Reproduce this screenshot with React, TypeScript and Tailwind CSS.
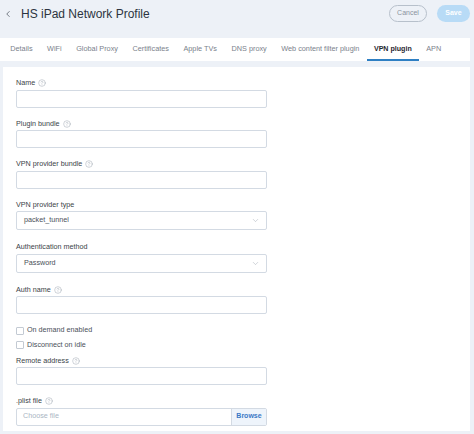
import { ChevronDown, ChevronLeft, CircleHelp } from "lucide-react"

const tabs = ["Details", "WiFi", "Global Proxy", "Certificates", "Apple TVs", "DNS proxy", "Web content filter plugin", "VPN plugin", "APN"]

const Label = ({ text, help = true }: { text: string; help?: boolean }) => (
  <div className="h-[10px] mb-[1.5px] flex items-center gap-[3px] text-[7.2px] leading-[10px] text-[#3a3f47]">
    <span>{text}</span>
    {help && <CircleHelp size={8} strokeWidth={1.4} className="text-[#9aa3ad]" />}
  </div>
)

const TextField = ({ label, className = "mb-[11px]" }: { label: string; className?: string }) => (
  <div className={className}>
    <Label text={label} />
    <div className="w-[251px] h-[18px] border border-[#d3dae3] rounded-[2px] bg-white" />
  </div>
)

const SelectField = ({ label, value }: { label: string; value: string }) => (
  <div className="mb-[12px]">
    <Label text={label} help={false} />
    <div className="w-[251px] h-[19px] border border-[#d3dae3] rounded-[2px] bg-white flex items-center justify-between pl-[7px] pr-[6px]">
      <span className="text-[7.2px] text-[#4a5059]">{value}</span>
      <ChevronDown size={9} strokeWidth={1.3} className="text-[#a2aab4]" />
    </div>
  </div>
)

const Check = ({ text }: { text: string }) => (
  <div className="h-[14.5px] flex items-center gap-[3px]">
    <span className="w-[8px] h-[8px] border border-[#c3cad3] rounded-[1px] bg-white" />
    <span className="text-[7.2px] text-[#4a5059]">{text}</span>
  </div>
)

export default function App() {
  return (
    <div className="w-[474px] h-[434px] overflow-hidden bg-[#edf1f7] font-['Liberation_Sans',Arial,sans-serif]">
      <header className="h-[38px] pt-[5px] flex items-start justify-between pr-[4px]">
        <div className="h-[17px] flex items-center">
          <ChevronLeft size={10} strokeWidth={1.6} className="ml-[3px] mr-[8px] text-[#3a414b]" />
          <h1 className="text-[12px] font-medium text-[#2c3440]">HS iPad Network Profile</h1>
        </div>
        <div className="flex gap-[10px]">
          <button className="w-[38px] h-[17px] rounded-full border border-[#b7c0cb] text-[7px] text-[#8a939e]">Cancel</button>
          <button className="w-[33px] h-[17px] rounded-full bg-[#b8dbf6] text-[7px] text-white font-semibold">Save</button>
        </div>
      </header>

      <nav className="w-[470px] h-[23px] bg-white flex pl-[3px]">
        {tabs.map((t) => (
          <div
            key={t}
            className={
              t === "VPN plugin"
                ? "px-[7.25px] flex items-center text-[7.1px] font-semibold text-[#1f2731] border-b-2 border-[#2e7fc3] pt-[2px]"
                : "px-[7.25px] flex items-center text-[7.3px] text-[#7b828c]"
            }
          >
            {t}
          </div>
        ))}
      </nav>

      <main className="mt-[6px] ml-[3px] w-[467px] h-[364px] bg-white pl-[13px] pt-[11px]">
        <TextField label="Name" />
        <TextField label="Plugin bundle" />
        <TextField label="VPN provider bundle" />
        <SelectField label="VPN provider type" value="packet_tunnel" />
        <SelectField label="Authentication method" value="Password" />
        <TextField label="Auth name" className="mb-[9.5px]" />
        <Check text="On demand enabled" />
        <Check text="Disconnect on idle" />
        <div className="mt-[3px]">
          <TextField label="Remote address" />
        </div>
        <div>
          <Label text=".plist file" />
          <div className="w-[251px] h-[18px] border border-[#d3dae3] rounded-[2px] bg-white flex">
            <span className="flex-1 flex items-center pl-[6px] text-[7.2px] text-[#aab5c3]">Choose file</span>
            <span className="w-[35px] flex items-center justify-center border-l border-[#d3dae3] bg-[#eef4fb] text-[7px] font-semibold text-[#3a78c6]">Browse</span>
          </div>
        </div>
      </main>
    </div>
  )
}
